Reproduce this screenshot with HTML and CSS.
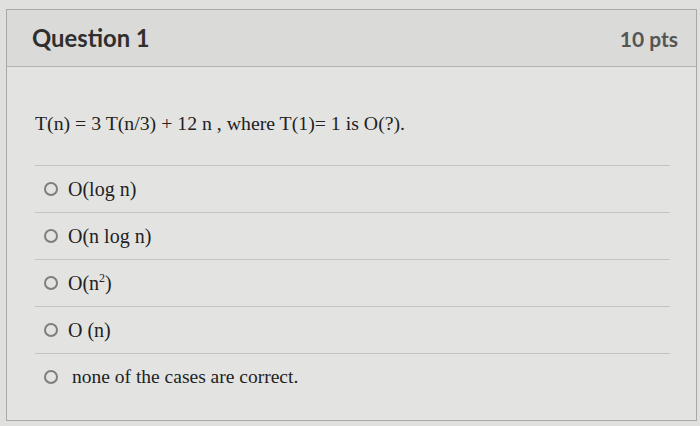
FILE: index.html
```html
<!DOCTYPE html>
<html>
<head>
<meta charset="utf-8">
<link rel="stylesheet" href="styles.css">
</head>
<body>
<div class="card">
  <div class="header">
    <span class="title">Question 1</span>
    <span class="pts">10 pts</span>
  </div>
  <div class="content">
    <p class="question">T(n) = 3 T(n/3) + 12 n , where T(1)= 1 is O(?).</p>
    <div class="answers">
      <div class="answer"><span class="radio"></span><span class="label">O(log n)</span></div>
      <div class="answer"><span class="radio"></span><span class="label">O(n log n)</span></div>
      <div class="answer"><span class="radio"></span><span class="label">O(n<sup>2</sup>)</span></div>
      <div class="answer"><span class="radio"></span><span class="label">O (n)</span></div>
      <div class="answer"><span class="radio"></span><span class="label wide">none of the cases are correct.</span></div>
    </div>
  </div>
</div>
</body>
</html>
```
FILE: styles.css
```css
html, body {
  margin: 0;
  padding: 0;
  background: #e0e0de;
}
.card {
  margin: 9px 3px 0 6px;
  height: 412px;
  border: 1px solid #a8a8a6;
  background: #e3e4e2;
  box-sizing: border-box;
}
.header {
  height: 57px;
  display: flex;
  justify-content: space-between;
  align-items: center;
  padding: 0 18px 0 25px;
  background: #dadbd9;
  border-bottom: 1px solid #b2b2b0;
  box-sizing: border-box;
  font-family: Lato, "Liberation Sans", sans-serif;
  font-weight: bold;
}
.title {
  font-size: 23.8px;
  color: #2f2f2f;
}
.pts {
  font-size: 21px;
  color: #555;
}
.content {
  padding: 0 26px 0 28px;
  font-family: "Liberation Serif", "Times New Roman", serif;
  color: #222;
}
.question {
  margin: 0;
  padding: 43px 0 29px;
  font-size: 19.8px;
  line-height: 26px;
}
.answers {
  display: flex;
  flex-direction: column;
}
.answer {
  height: 47px;
  border-top: 1px solid #c4c4c2;
  display: flex;
  align-items: center;
  padding-left: 9px;
  box-sizing: border-box;
  font-size: 20px;
}
.radio {
  width: 10px;
  height: 10px;
  border: 2.2px solid #7e7e7e;
  border-radius: 50%;
  margin-right: 10px;
  flex: none;
}
.label sup {
  font-size: 12px;
  line-height: 0;
}
.label.wide {
  margin-left: 4px;
  font-size: 19.5px;
}
```
